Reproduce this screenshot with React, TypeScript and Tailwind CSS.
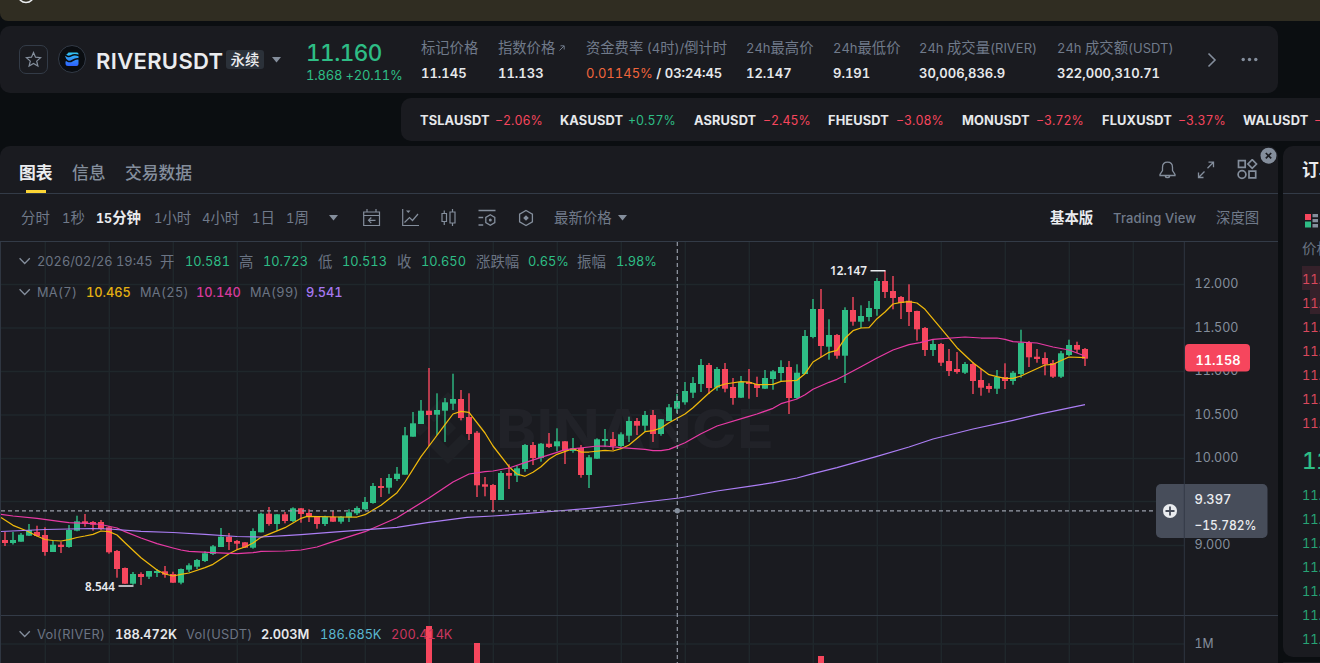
import React from "react";
import { SiBinance } from "react-icons/si";

type Candle = [string, number, number, number, number];

const X0 = 5;
const STEP = 8;
const UP = "#2ebd85";
const DOWN = "#f6465d";

// direction, high, body top, body bottom, low
const candles: Candle[] = [
  ["r", 532, 540, 543, 546], ["g", 532, 540, 543, 544.5], ["g", 533, 534.7, 541.7, 541.7], ["g", 524, 530, 535.7, 536], ["r", 525.7, 532, 536, 536.5],
  ["r", 527.3, 535, 552, 555.7], ["g", 540.7, 544.7, 552, 552], ["r", 541.7, 544.7, 547, 553], ["g", 525, 530, 547, 547.7], ["g", 515.7, 521.3, 530.7, 531.3],
  ["r", 514, 521.3, 523.5, 526.7], ["r", 521, 522, 524.7, 530.7], ["r", 520, 522, 529, 530], ["r", 526, 527.3, 552.3, 553.7], ["r", 550, 551, 569, 577.7],
  ["r", 567.5, 568, 583.7, 584], ["g", 572, 574, 583.7, 584.7], ["r", 572.3, 574, 577, 585], ["g", 571, 571, 576.7, 579], ["g", 569, 571, 573, 577],
  ["r", 566, 571.3, 574.7, 577.7], ["r", 571.7, 574, 582.7, 583], ["g", 568.5, 569, 582.7, 584.3], ["g", 563.3, 565.3, 569.7, 572], ["g", 559, 560, 566.7, 569],
  ["g", 551.3, 553.3, 561, 562], ["g", 545, 546.3, 554, 555], ["g", 528, 536.7, 547, 547], ["r", 533, 536.7, 542, 550], ["r", 540, 541, 543.7, 549.7],
  ["r", 542, 542.3, 547.7, 548], ["g", 528.3, 531, 547.7, 548.7], ["g", 512.7, 513.7, 532.3, 532.3], ["r", 507, 513.7, 524, 525.7], ["g", 514, 514.3, 524, 530.7],
  ["r", 512, 514.3, 521, 523.3], ["g", 507.3, 508.3, 521, 522], ["r", 508, 508.3, 514, 522.7], ["r", 509.3, 513, 517, 522], ["r", 516.5, 517, 524, 528.7],
  ["g", 515.7, 516.7, 524, 526], ["r", 510.7, 517, 521.7, 522], ["g", 516, 516.7, 521.7, 523.7], ["g", 509.3, 512.3, 517.3, 522], ["g", 506.3, 508, 513.3, 515],
  ["g", 497, 502, 509.3, 510.3], ["g", 483, 486, 503, 503.7], ["r", 478, 486, 488, 497], ["g", 474, 478, 487.7, 493.7], ["g", 467, 473.7, 479, 481],
  ["g", 427, 435.3, 474.7, 474.7], ["g", 412, 423.3, 436.7, 436.7], ["g", 400, 410.7, 424, 424], ["r", 368, 410.7, 415, 446], ["g", 393.3, 410, 414.7, 435],
  ["g", 398, 402.3, 410.7, 442], ["g", 373.7, 399, 403.7, 410], ["r", 390, 399, 418, 420.3], ["r", 393.3, 417, 434, 440], ["r", 431, 432.7, 485.3, 497],
  ["r", 477, 484.3, 486.7, 496.3], ["r", 484, 485, 500, 512.3], ["g", 471, 473, 500, 500], ["r", 464.3, 473, 475.7, 489], ["g", 466, 468.3, 475.7, 482],
  ["g", 444, 445, 469, 471.7], ["r", 442, 445, 458, 465], ["g", 443, 443.7, 458, 461.7], ["r", 433, 443.7, 447, 448], ["g", 428.3, 441.3, 446.3, 451.3],
  ["r", 441, 441.3, 450.7, 464], ["g", 438, 448.3, 451, 452.7], ["r", 445, 448, 475, 477.7], ["g", 455, 457.3, 475, 488], ["g", 438.3, 439.3, 458.7, 459],
  ["g", 429, 439, 441, 447], ["r", 432, 439, 446, 450], ["g", 432.3, 434.3, 446, 447], ["g", 416.7, 421, 435.7, 442], ["r", 418, 421, 425.7, 435],
  ["g", 411, 415, 425.7, 431.7], ["r", 410, 415, 434, 442], ["g", 419, 419.3, 434, 435.7], ["g", 404, 407.3, 421, 421], ["g", 394, 401, 408.7, 413],
  ["g", 382, 391, 402.3, 404.7], ["g", 377, 383, 392.7, 398], ["g", 359, 365, 384, 392], ["r", 363, 365, 388, 394], ["g", 367, 369, 387.7, 390.7],
  ["r", 363, 369, 388.7, 392.3], ["r", 378, 387, 398, 404.7], ["g", 376, 382, 397.7, 398], ["r", 369, 382, 384, 398.7], ["r", 376.7, 384, 388, 397],
  ["g", 370, 378, 388.7, 389], ["g", 370, 371.3, 379, 389.7], ["g", 360.3, 367, 373, 381], ["r", 361, 367, 398, 414], ["g", 364.3, 372.7, 398, 399],
  ["g", 330, 336, 374, 374], ["g", 299, 309, 337, 338.3], ["r", 289, 309, 346, 357], ["g", 319.3, 335, 346.7, 359.7], ["r", 334, 335, 355.7, 358.7],
  ["g", 307.3, 310, 355.7, 383], ["r", 297, 310, 321.7, 325.7], ["g", 305.3, 316, 321.7, 328], ["g", 301, 308, 317, 321.3], ["g", 278, 281, 309, 315.7],
  ["r", 270.7, 281, 292, 298], ["r", 276, 291, 298, 309.3], ["r", 296, 297, 303, 319], ["r", 284.3, 300.7, 312, 326], ["r", 310.7, 311, 329.3, 340.7],
  ["r", 327, 328, 350, 356], ["g", 339.3, 344, 350, 356], ["r", 343, 344, 362.7, 366], ["r", 349, 361, 371, 376], ["r", 352, 369, 372, 373.7],
  ["g", 362, 364, 372.7, 374], ["r", 362, 364, 381, 394], ["r", 369, 380, 387.7, 395.7], ["r", 383.3, 386, 389, 392.7], ["g", 370, 377, 388.7, 394],
  ["r", 363.3, 377, 381, 389], ["g", 371, 372.7, 381, 384.7], ["g", 329.7, 343, 374, 377.7], ["r", 341, 343, 357.3, 367], ["r", 349, 356.7, 359, 362.7],
  ["r", 352.3, 358, 364.3, 375.3], ["r", 360, 363, 376.7, 378], ["g", 351, 353.3, 376.7, 378], ["g", 339.7, 345, 355, 356], ["r", 341.7, 345, 349.7, 353],
  ["r", 348, 349, 358.7, 366],
];

const MA7 =
  "1,517.5 13,525.3 27,531 37,536 45,539.5 53,540.5 61,541 69,539.7 77,537.5 85,536 93,534.3 101,531 109,531.7 117,535 125,542.7 141,557.7 157,570 165,574 173,576 181,574.3 189,573 205,567.7 213,564.3 229,553.7 237,549.7 245,547 253,543 261,537.3 285,527.7 301,518.3 307,516.3 340,517 357,517 365,514.7 373,510 381,505.3 397,492.7 405,482 421,456.7 429,446 445,424.7 453,414 461,411.3 469,412.3 485,433 493,446 509,466.7 517,474 525,476.3 533,472.3 541,466.7 549,459.3 557,454.3 573,448.7 581,452 589,452 605,450.3 613,451 621,448.7 629,445 645,431.7 653,430.7 661,428 669,422.7 685,414 693,407.7 709,393 717,386.7 725,384 741,381.7 749,382 757,384.7 773,384.3 781,381.3 797,380.3 805,373.7 813,362 829,352.3 837,350.3 845,338.3 853,330.7 861,328 869,327.7 877,318.7 885,312 893,304 901,302.3 909,301.7 917,303 925,309.3 941,328.3 957,347.7 973,362.7 989,374.7 997,376.7 1005,378.3 1013,378.3 1021,376 1029,372.3 1045,365 1053,364.3 1069,357 1085,357.7";
const MA25 =
  "1,514.3 13,516 37,518.3 61,521.7 69,522.7 93,523.7 101,524.5 117,528 125,531.7 141,538 157,543.7 173,548 181,550 189,551.3 213,552.7 237,553.7 253,552.7 261,551.3 285,551 301,550 317,547 330,542.7 365,531.7 397,517.7 429,498 453,482 469,474 485,471.7 493,471 509,468 525,462.7 541,457.3 557,452.3 565,449.7 589,447 597,446 605,446 621,447.7 645,449.3 653,450.7 661,450.7 669,449.3 679,445.3 685,442.7 701,433.7 717,426 749,416.3 757,414 773,408.3 781,403.7 797,399 805,394.7 813,389.3 829,382.3 837,379.3 845,375.3 861,366.7 877,358 893,350 909,344.7 920,342.7 933,339.3 965,337 981,338 997,338 1005,339.3 1013,341.7 1037,343 1053,347 1069,350 1077,353 1085,356";
const MA99 =
  "1,531.5 45,529.5 93,528.5 109,529 141,531.3 173,532.5 205,534.3 237,536.5 261,537 285,535.7 301,534.7 330,532.3 397,527.3 429,522.3 467,517.3 493,516 525,513.7 557,511 589,508.3 621,505 645,502 679,498 685,497 717,491 749,486.3 773,482.7 797,478 813,473.7 837,467.7 877,456.3 909,447 933,439 973,429 1013,420.3 1037,414.7 1085,404.7";

const gridX = [45, 109, 173, 237, 301, 365, 429, 493, 557, 621, 685, 749, 813, 877, 941, 1005, 1069, 1133];
const gridY = [284.5, 328, 371.5, 415, 458.5, 501.5, 545.5, 644];
const axis: [string, number, number][] = [
  ["12.000", 288, 44], ["11.500", 332, 44], ["11.000", 375, 44], ["10.500", 419, 44], ["10.000", 462, 44], ["9.000", 549, 36], ["1M", 648, 19],
];
const volumes: [number, number][] = [[429, 626], [477, 643], [821, 656]];

const tickers: [string, string, string, string][] = [
  ["TSLAUSDT", "−2.06%", "w-[75px]", "w-[65px]"],
  ["KASUSDT", "+0.57%", "w-[68px]", "w-[66px]"],
  ["ASRUSDT", "−2.45%", "w-[69px]", "w-[65px]"],
  ["FHEUSDT", "−3.08%", "w-[68px]", "w-[66px]"],
  ["MONUSDT", "−3.72%", "w-[74px]", "w-[66px]"],
  ["FLUXUSDT", "−3.37%", "w-[76px]", "w-[65px]"],
  ["WALUSDT", "−2.91%", "w-[71px]", "w-[65px]"],
];

const asks = ["11.167", "11.166", "11.165", "11.164", "11.163", "11.162", "11.161"];
const bids = ["11.160", "11.159", "11.158", "11.157", "11.156", "11.155", "11.154"];

function Cell({ w, c = "", children }: { w: string; c?: string; children: React.ReactNode }) {
  return <span className={`block shrink-0 whitespace-nowrap ${w} ${c}`}>{children}</span>;
}

function Latin({ children }: { children: React.ReactNode }) {
  return <span className="text-[13px]">{children}</span>;
}

function Stat({ w, label, children }: { w: string; label: React.ReactNode; children: React.ReactNode }) {
  return (
    <div className={`shrink-0 whitespace-nowrap ${w}`}>
      <div className="h-[25px] text-[14.3px] leading-[20px] text-[#707a8a]">{label}</div>
      <div className="text-[13px] font-semibold leading-[20px] text-[#e6e8eb]">{children}</div>
    </div>
  );
}

function Caret({ c }: { c: string }) {
  return (
    <svg className={`shrink-0 ${c}`} width="9" height="6" viewBox="0 0 9 6">
      <path d="M0 0h9L4.5 5.6z" fill="#848e9c" />
    </svg>
  );
}

function Chevron() {
  return (
    <svg className="mb-[2px] mr-[7px] shrink-0" width="12" height="8" viewBox="0 0 12 8" fill="none" stroke="#848e9c" strokeWidth="1.3">
      <path d="M.6 1.2 5.700 6.500l5.100-5.300" />
    </svg>
  );
}

function Header() {
  return (
    <header className="mt-[5px] flex h-[67px] w-[1278px] shrink-0 rounded-[10px] bg-[#1a1b20]">
      <div className="ml-[19px] mt-[19px] flex h-[29px] w-[29px] shrink-0 items-center justify-center rounded-[7px] border border-[#333b47]">
        <svg width="17" height="17" viewBox="0 0 17 17" fill="none" stroke="#848e9c" strokeWidth="1.2" strokeLinejoin="miter">
          <path d="M8.500 1.500 10.500 6.200l5.100.5-3.900 3.400 1.200 5-4.400-2.700-4.400 2.700 1.200-5L1.400 6.700l5.100-.5z" />
        </svg>
      </div>
      <svg className="ml-[10px] mt-[19px] shrink-0" width="28" height="28" viewBox="0 0 28 28" fill="none">
        <defs>
          <linearGradient id="river" x1="0" y1="7" x2="0" y2="21" gradientUnits="userSpaceOnUse">
            <stop offset="0" stopColor="#33cdf2" />
            <stop offset="0.600" stopColor="#2f86fa" />
            <stop offset="1" stopColor="#2f62ff" />
          </linearGradient>
        </defs>
        <circle cx="14" cy="14" r="13.500" fill="#0a0d11" stroke="#333b47" />
        <path d="M10.500 7.500H19q1.500 0 1.500 1.500v10q0 2-2 2H10q-2.500 0-2.500-2.500V16.500L9 16l-1.800-3V9.500h1.500z" fill="url(#river)" />
        <path d="M6 8.200c2 3.600 4.800 4 7.500 2.400 2.200-1.300 4.500-1 7.500-.1M6.500 12c1.500 4.800 5 5.500 8 3.500 2-1.300 4-2.500 6.500-1.500" stroke="#0a0d11" strokeWidth="1.600" />
      </svg>
      <div className="ml-[10px] mt-[18px] flex h-[33px] w-[210px] shrink-0 items-center">
        <Cell w="w-[130px]" c="pt-[2px] text-[22px] font-semibold leading-[33px] tracking-[0.350px] text-[#eaecef]">RIVERUSDT</Cell>
        <span className="mb-[2px] h-[19px] w-[38px] rounded-[3px] bg-[#2b3139] text-center text-[14.4px] font-medium leading-[20px] text-[#eaecef]">永续</span>
        <Caret c="mb-[1px] ml-[8px]" />
      </div>
      <div className="mt-[13px] w-[115px] shrink-0 whitespace-nowrap text-[#2ebd85]">
        <div className="text-[22.5px] font-medium leading-[27px] tracking-[-0.5px]">11.160</div>
        <div className="text-[13px] leading-[18px] tracking-[-0.200px]">1.868 +20.11%</div>
      </div>
      <div className="mt-[12px] flex shrink-0">
        <Stat w="w-[77px]" label="标记价格">11.145</Stat>
        <Stat
          w="w-[88px]"
          label={
            <span className="flex items-center">
              指数价格
              <svg className="ml-[4px]" width="6" height="6" viewBox="0 0 6 6" fill="none" stroke="#707a8a">
                <path d="M.5 5.500 5 1M1.500.8H5.200V4.500" />
              </svg>
            </span>
          }
        >
          11.133
        </Stat>
        <Stat w="w-[160px]" label={<>资金费率<Latin> (4</Latin>时<Latin>)/</Latin>倒计时</>}>
          <span className="font-normal text-[#f0653c]">0.01145%</span> / 03:24:45
        </Stat>
        <Stat w="w-[87px]" label={<><Latin>24h</Latin>最高价</>}>12.147</Stat>
        <Stat w="w-[86px]" label={<><Latin>24h</Latin>最低价</>}>9.191</Stat>
        <Stat w="w-[138px]" label={<><Latin>24h </Latin>成交量<Latin>(RIVER)</Latin></>}>30,006,836.9</Stat>
        <Stat w="w-[150px]" label={<><Latin>24h </Latin>成交额<Latin>(USDT)</Latin></>}>322,000,310.71</Stat>
      </div>
      <svg className="mt-[26px] shrink-0" width="10" height="16" viewBox="0 0 10 16" fill="none" stroke="#848e9c" strokeWidth="1.600">
        <path d="m1.500 1.500 6.500 6.500-6.500 6.500" />
      </svg>
      <svg className="ml-[24px] mt-[31px] shrink-0" width="17" height="5" viewBox="0 0 17 5" fill="#848e9c">
        <circle cx="2.200" cy="2.500" r="1.700" />
        <circle cx="8.500" cy="2.500" r="1.700" />
        <circle cx="14.800" cy="2.500" r="1.700" />
      </svg>
    </header>
  );
}

function ToolIcons() {
  return (
    <div className="flex shrink-0 items-center">
      <svg className="ml-[25px] shrink-0" width="18" height="18" viewBox="0 0 18 18" fill="none" stroke="#848e9c" strokeWidth="1.200">
        <path d="M.7 3h15.800v13.500H.7zM.7 6.500h15.800M4 0v3M13 0v3M12.500 11.300H5.500M8.300 8.500 5.500 11.300l2.800 2.800" />
      </svg>
      <svg className="ml-[21px] shrink-0" width="18" height="18" viewBox="0 0 18 18" fill="none" stroke="#848e9c" strokeWidth="1.200">
        <path d="M.7 0v16.500H17M2.500 13.500l5-5 3 3L16 5" />
        <path d="M4 1.500h4.500L6.300 4z" fill="#848e9c" stroke="none" />
      </svg>
      <svg className="ml-[21px] shrink-0" width="17" height="18" viewBox="0 0 17 18" fill="none" stroke="#848e9c" strokeWidth="1.200">
        <path d="M1 4.500h4.500v8H1zM3.250 1.500v3M3.250 12.500v3.500M9 3h5v11H9zM11.500 0v3M11.500 14v3" />
      </svg>
      <svg className="ml-[20px] shrink-0" width="18" height="18" viewBox="0 0 18 18" fill="none" stroke="#848e9c" strokeWidth="1.300">
        <path d="M.5 1.500h17M.5 8.500h4.700M.5 16h4.700M12.300 5.800l4.500 2.600v5.200l-4.500 2.600-4.500-2.600V8.400z" />
        <circle cx="12.300" cy="11" r="1.500" fill="#848e9c" stroke="none" />
      </svg>
      <svg className="ml-[22px] shrink-0" width="16" height="18" viewBox="0 0 16 18" fill="none" stroke="#848e9c" strokeWidth="1.300">
        <path d="M8 1.500 14.400 5.200v7.600L8 16.500 1.600 12.800V5.200z" />
        <path d="M8 6.200 10.800 9 8 11.800 5.200 9z" fill="#848e9c" stroke="none" />
      </svg>
    </div>
  );
}

function Chart() {
  return (
    <svg className="block" width="1278" height="421" viewBox="0 242 1278 421">
      <g stroke="#1f272b" strokeWidth="1.500">
        {gridX.map((x) => <path key={x} d={`M${x + 0.3} 242V615M${x + 0.3} 616V663`} />)}
        {gridY.map((y) => <path key={y} d={`M1 ${y}H1184`} />)}
      </g>
      <g fill="#212228">
        <SiBinance x="412" y="392" width="72" height="72" size={72} color="#1f2126" />
        <text x="496" y="448" fontSize="54" fontWeight="700" textLength="278" lengthAdjust="spacingAndGlyphs">BINANCE</text>
      </g>
      <path d="M0 615.500H1278" stroke="#333b47" />
      <path d="M1184.300 242V663M.5 242V663" stroke="#2f3641" />
      {volumes.map(([x, y]) => <rect key={x} x={x - 3} y={y} width="6" height={663 - y} fill={DOWN} />)}
      {candles.map(([d, h, t, b, l], i) => {
        const x = X0 + STEP * i;
        const color = d === "g" ? UP : DOWN;
        return (
          <g key={i} fill={color}>
            <rect x={x - 0.7} y={h} width="1.400" height={l - h} />
            <rect x={x - 3} y={t} width="6" height={b - t} />
          </g>
        );
      })}
      <g fill="none" strokeWidth="1.250" strokeLinejoin="round">
        <polyline points={MA7} stroke="#f0b90b" />
        <polyline points={MA25} stroke="#e83aa5" />
        <polyline points={MA99} stroke="#ac7ef5" />
      </g>
      <g stroke="#9aa0ab" strokeWidth="1.150" strokeDasharray="4 3">
        <path d="M677.300 242V663" />
        <path d="M1 510.900H1156" />
      </g>
      <circle cx="677.300" cy="510.800" r="2.700" fill="#848e9c" />
      <g fill="#eaecef" fontSize="12.500" fontWeight="600" className="font-['Noto_Sans']">
        <text x="830" y="275" textLength="37" lengthAdjust="spacingAndGlyphs">12.147</text>
        <text x="85" y="591" textLength="30" lengthAdjust="spacingAndGlyphs">8.544</text>
      </g>
      <path d="M870.500 270.700H885.500M118.500 586H133.500" stroke="#eaecef" strokeWidth="1.400" />
      <g fill="#848e9c" fontSize="12.600">
        {axis.map(([t, y, w]) => <text key={t} x="1194.500" y={y} textLength={w} lengthAdjust="spacingAndGlyphs">{t}</text>)}
      </g>
      <rect x="1185" y="344" width="65" height="27.500" rx="4" fill={DOWN} />
      <text x="1195.500" y="365" fontSize="12.600" fontWeight="600" fill="#fff" textLength="45" lengthAdjust="spacingAndGlyphs">11.158</text>
      <rect x="1156" y="484" width="111.500" height="54" rx="5" fill="#474d5a" />
      <path d="M1184.300 484V538" stroke="#343a46" />
      <circle cx="1170" cy="511" r="7" fill="#eaecef" />
      <path d="M1165.500 511h9M1170 506.500v9" stroke="#474d5a" strokeWidth="1.800" />
      <g fill="#eaecef" fontSize="12.600" fontWeight="500">
        <text x="1194.500" y="504" textLength="37" lengthAdjust="spacingAndGlyphs">9.397</text>
        <text x="1194.500" y="530" textLength="62" lengthAdjust="spacingAndGlyphs">−15.782%</text>
      </g>
    </svg>
  );
}

function Legend() {
  const num = "tracking-normal text-[#2ebd85]";
  return (
    <>
      <div className="absolute left-[19px] top-[10px] flex h-[20px] items-center text-[12.8px] leading-[20px] tracking-[0.3px] text-[#6b7483]">
        <Chevron />
        <Cell w="w-[123px]" c="-ml-px tracking-normal">2026/02/26 19:45</Cell>
        <Cell w="w-[25px]" c="text-[14.4px]">开</Cell><Cell w="w-[54px]" c={num}>10.581</Cell>
        <Cell w="w-[24px]" c="text-[14.4px]">高</Cell><Cell w="w-[55px]" c={num}>10.723</Cell>
        <Cell w="w-[24px]" c="text-[14.4px]">低</Cell><Cell w="w-[55px]" c={num}>10.513</Cell>
        <Cell w="w-[24px]" c="text-[14.4px]">收</Cell><Cell w="w-[55px]" c={num}>10.650</Cell>
        <Cell w="w-[52px]" c="text-[14.4px] tracking-normal">涨跌幅</Cell><Cell w="w-[49px]" c={num}>0.65%</Cell>
        <Cell w="w-[39px]" c="text-[14.4px] tracking-normal">振幅</Cell><Cell w="w-[50px]" c={num}>1.98%</Cell>
      </div>
      <div className="absolute left-[19px] top-[41px] flex h-[20px] items-center text-[12.8px] leading-[20px] tracking-[0.3px] text-[#6b7483]">
        <Chevron />
        <Cell w="w-[49px]" c="-ml-px">MA(7)</Cell><Cell w="w-[54px]" c="font-medium tracking-normal text-[#e5b112]">10.465</Cell>
        <Cell w="w-[56px]">MA(25)</Cell><Cell w="w-[54px]" c="font-medium tracking-normal text-[#d63a9b]">10.140</Cell>
        <Cell w="w-[56px]">MA(99)</Cell><Cell w="w-[40px]" c="font-medium tracking-normal text-[#a678f0]">9.541</Cell>
      </div>
      <div className="absolute left-[19px] top-[383px] flex h-[20px] items-center text-[12.8px] leading-[20px] tracking-[0.3px] text-[#6b7483]">
        <Chevron />
        <Cell w="w-[78px]" c="-ml-px">Vol(RIVER)</Cell><Cell w="w-[71px]" c="font-semibold tracking-normal text-[#e6e8eb]">188.472K</Cell>
        <Cell w="w-[75px]">Vol(USDT)</Cell><Cell w="w-[59px]" c="font-semibold tracking-normal text-[#e6e8eb]">2.003M</Cell>
        <Cell w="w-[71px]" c="tracking-[-0.050px] text-[#5ab7cf]">186.685K</Cell><Cell w="w-[66px]" c="tracking-[-0.050px] text-[#c9365f]">200.414K</Cell>
      </div>
    </>
  );
}

function ChartPanel() {
  return (
    <section className="relative flex h-[517px] w-[1278px] shrink-0 flex-col rounded-t-[10px] bg-[#1a1b20]">
      <div className="flex h-[48px] shrink-0 border-b border-[#333b47] text-[16.8px] leading-[25px] text-[#848e9c]">
        <div className="ml-[19px] mt-[15px] flex w-[53px] shrink-0 flex-col">
          <span className="font-bold text-[#eaecef]">图表</span>
          <span className="ml-[7px] mt-[4px] h-[3px] w-[20px] bg-[#fcd535]" />
        </div>
        <Cell w="w-[53px]" c="mt-[15px] font-medium">信息</Cell>
        <Cell w="w-[80px]" c="mt-[15px] font-medium">交易数据</Cell>
        <div className="ml-auto mr-[20px] flex items-center gap-[21px]">
          <svg width="18" height="18" viewBox="0 0 18 18" fill="none" stroke="#848e9c" strokeWidth="1.300">
            <path d="M9.500 1.200c-3.200 0-5 2.400-5 5.300v3L2 13.500v1h15v-1L14.500 9.500v-3C14.500 3.600 12.700 1.200 9.500 1.200zM7 14.500c.3 1.500 1.200 2.200 2.500 2.200s2.200-.7 2.500-2.200" />
          </svg>
          <svg width="18" height="18" viewBox="0 0 18 18" fill="none" stroke="#848e9c" strokeWidth="1.300">
            <path d="M11.500 1.200h5v5M6.500 16.500h-5v-5M16.200 1.500l-5.700 5.700M7.500 10.500l-5.700 5.700" />
          </svg>
          <svg width="22" height="22" viewBox="0 0 22 22" fill="none" stroke="#848e9c" strokeWidth="1.700">
            <path d="M2.500 1.700h6.700v6.700H2.500zM13 12.200h6.700v6.700H13zM16.200.7l4.300 4.300-4.300 4.300L11.900 5z" />
            <circle cx="6" cy="15.500" r="3.900" />
          </svg>
        </div>
      </div>
      <svg className="absolute left-[1260px] top-[1px]" width="17" height="17" viewBox="0 0 17 17">
        <circle cx="8.500" cy="8.700" r="8" fill="#848e9c" />
        <path d="m5.800 6 5.400 5.400m0-5.400-5.400 5.400" stroke="#1a1b20" strokeWidth="1.700" />
      </svg>
      <div className="flex h-[48px] shrink-0 items-center border-b border-[#333b47] pl-[21px] text-[14.4px] text-[#707a8a]">
        <Cell w="w-[41px]">分时</Cell>
        <Cell w="w-[34px]"><Latin>1</Latin>秒</Cell>
        <Cell w="w-[58px]" c="font-bold text-[#eaecef]"><span className="text-[12.5px]">15</span>分钟</Cell>
        <Cell w="w-[48px]"><Latin>1</Latin>小时</Cell>
        <Cell w="w-[50px]"><Latin>4</Latin>小时</Cell>
        <Cell w="w-[34px]"><Latin>1</Latin>日</Cell>
        <Cell w="w-[43px]"><Latin>1</Latin>周</Cell>
        <Caret c="" />
        <ToolIcons />
        <Cell w="w-[64px]" c="ml-[20px]">最新价格</Cell>
        <Caret c="" />
        <div className="ml-auto mr-[14px] flex pt-px">
          <Cell w="w-[63px]" c="font-bold text-[#eaecef]">基本版</Cell>
          <Cell w="w-[103px]" c="text-[13px] font-medium leading-[22px] tracking-[0.150px]">Trading View</Cell>
          <Cell w="w-[48px]">深度图</Cell>
        </div>
      </div>
      <div className="relative h-[421px] shrink-0">
        <Chart />
        <Legend />
      </div>
    </section>
  );
}

function Row({ v, c }: { v: string; c: string }) {
  return <div className={`h-[24px] whitespace-nowrap text-[12.8px] leading-[28px] ${c}`}>{v}</div>;
}

function OrderBook() {
  return (
    <div className="ml-[5px] flex shrink-0 flex-col gap-[5px]">
      <section className="flex h-[511px] w-[300px] shrink-0 flex-col rounded-[10px] bg-[#1a1b20]">
        <div className="h-[48px] shrink-0 border-b border-[#333b47] pl-[19px] pt-[12px] text-[16.8px] font-bold leading-[25px] text-[#eaecef]">订单簿</div>
        <div className="pl-[19px]">
          <svg className="ml-[3px] mt-[20px] block" width="14" height="14" viewBox="0 0 14 14">
            <path d="M0 0h6v6H0z" fill="#f6465d" />
            <path d="M0 7.500h6v6H0z" fill="#2ebd85" />
            <path d="M7.500 0H13v3.200H7.500zM7.500 5H13v3.200H7.500zM7.500 10H13v3.500H7.500z" fill="#848e9c" />
          </svg>
          <div className="mt-[10px] h-[28px] text-[14.4px] leading-[21px] text-[#6b7483]">价格 (USDT)</div>
          <div>
            {asks.map((v, i) => (
              <div key={v} className={i === 0 ? "bg-[#35212a]" : i === 1 ? "bg-linear-to-r from-[#1a1b20] from-[8px] to-[#35212a] to-[8px]" : ""}>
                <Row v={v} c="text-[#d8485c]" />
              </div>
            ))}
          </div>
          <div className="h-[48px] text-[22.5px] font-medium leading-[53px] tracking-[-0.5px] text-[#2ebd85]">11.160</div>
          {bids.map((v) => <Row key={v} v={v} c="text-[#27a375]" />)}
        </div>
      </section>
      <section className="h-[40px] w-[300px] rounded-[10px] bg-[#1a1b20]" />
    </div>
  );
}

export default function App() {
  return (
    <div className="flex h-[663px] w-[1320px] flex-col overflow-hidden bg-[#0b0e11] font-['Inter','Noto_Sans_CJK_SC',sans-serif] tabular-nums">
      <div className="h-[21px] shrink-0 overflow-hidden rounded-bl-[8px] bg-[#302d22]">
        <svg className="ml-[17px]" width="18" height="6" viewBox="0 0 18 6" fill="none" stroke="#eaecef" strokeWidth="1.500">
          <circle cx="9" cy="-5.500" r="8" />
        </svg>
      </div>
      <Header />
      <div className="ml-[401px] mt-[5px] flex h-[43px] shrink-0 items-center overflow-hidden rounded-l-[10px] bg-[#1a1b20] pl-[19px] pt-[3px] text-[12.8px] leading-[20px]">
        {tickers.map(([n, p, a, b]) => (
          <React.Fragment key={n}>
            <Cell w={a} c="font-bold tracking-[0.150px] text-[#e6e8eb]">{n}</Cell>
            <Cell w={b} c={p[0] === "+" ? "text-[12.4px] text-[#2ebd85]" : "text-[12.4px] text-[#f6465d]"}>{p}</Cell>
          </React.Fragment>
        ))}
      </div>
      <main className="mt-[5px] flex h-[517px] shrink-0 overflow-hidden">
        <ChartPanel />
        <OrderBook />
      </main>
    </div>
  );
}
